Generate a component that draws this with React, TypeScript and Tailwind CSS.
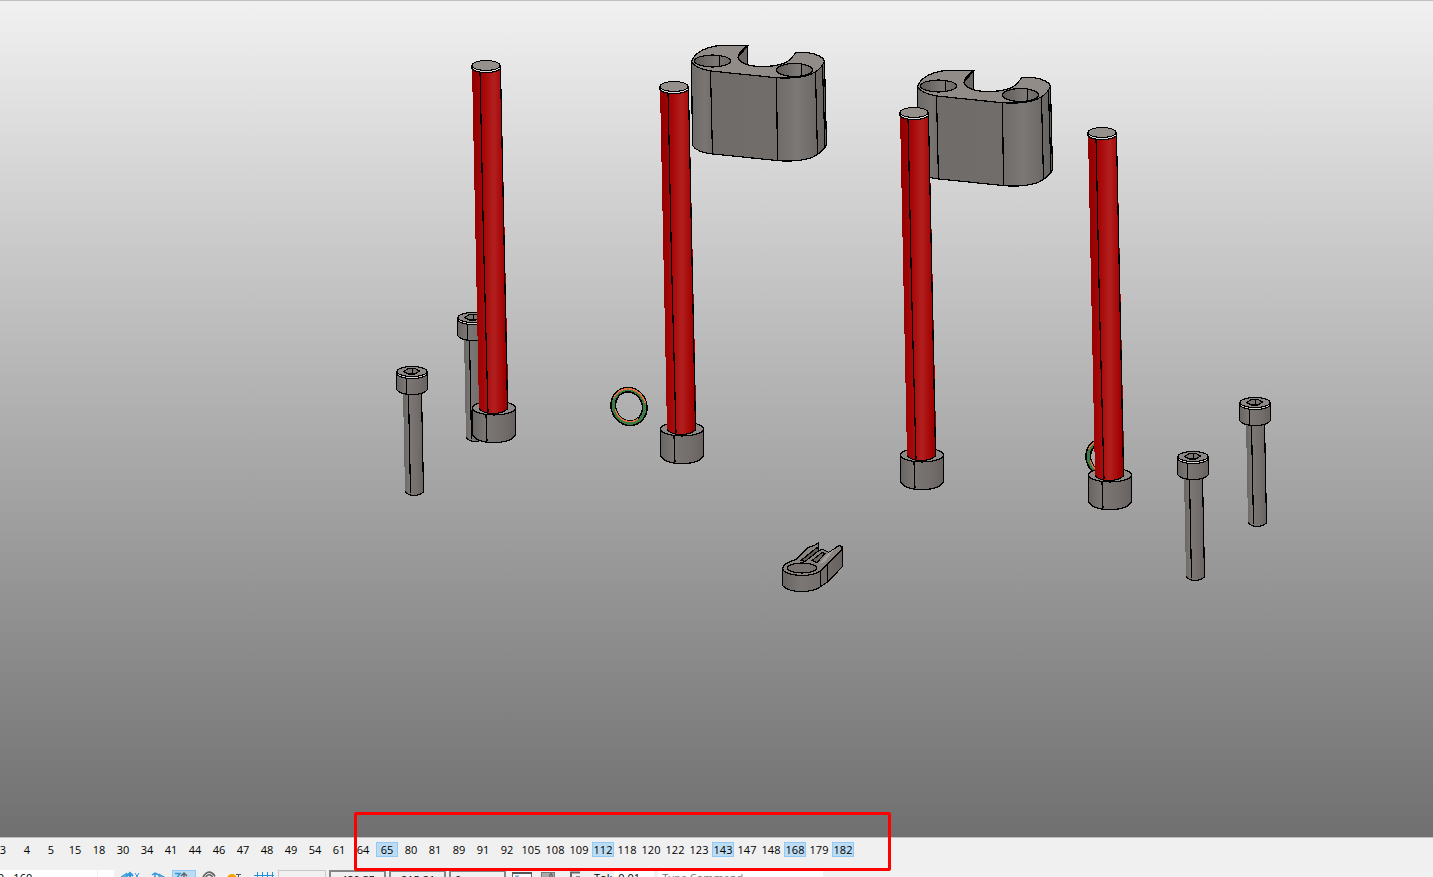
import React, { useState } from "react";
import clsx from "clsx";

const LAYERS = [
  3, 4, 5, 15, 18, 30, 34, 41, 44, 46, 47, 48, 49, 54, 61, 64, 65, 80, 81, 89, 91, 92, 105, 108,
  109, 112, 118, 120, 122, 123, 143, 147, 148, 168, 179, 182,
];

interface PartProps {
  x: number;
  y: number;
}

// Long red socket screw
const LongScrew = ({ x, y }: PartProps) => (
  <g transform={`translate(${x} ${y})`} stroke="#000" strokeWidth="1.2">
    <path d="M472.5 408V435Q476 443 494 443T515.5 435V408Z" fill="url(#steel)" />
    <ellipse cx="494" cy="408.5" rx="21.5" ry="7" fill="#8f8a87" />
    <path d="M486 415L487 442" fill="none" />
    <path d="M472 68L479 409Q483 414 493 414T508.500 409L501 68Z" fill="url(#red)" stroke="none" />
    <path d="M480 71L483.500 240L488 413M500.500 70L504 240L507.500 409" fill="none" />
    <path d="M479 409Q483 414 493 414T508 409" fill="none" />
    <path d="M472 66V69Q475 73 486 73T500.500 69V66Z" fill="#dcdbdb" />
    <ellipse cx="486" cy="66" rx="14" ry="5" fill="#96908c" />
  </g>
);

const ShortScrew = ({ x, y }: PartProps) => (
  <g transform={`translate(${x} ${y})`} stroke="#000" strokeWidth="1.2">
    <path d="M403 392L405 492Q408 496 414 496T424 492L421.5 392Z" fill="url(#steel)" stroke="none" />
    <path d="M408.5 394L410.5 494M421.5 392L423.5 492M405 492Q408 496 414 496T424 492" fill="none" />
    <path d="M396.5 373V390Q400 395 412 395T427.500 390V373Z" fill="url(#steel)" />
    <path d="M406.5 378V395" fill="none" />
    <ellipse cx="412" cy="373.500" rx="15.5" ry="5.5" fill="#d5d3d2" />
    <ellipse cx="412" cy="372" rx="15" ry="5" fill="#8f8a87" />
    <path d="M404 372L408 369H415L419.5 371.500L415 374.500H408Z" fill="#7a7572" />
    <path d="M412.5 369V374" fill="none" />
  </g>
);

const ClampBlock = ({ x, y }: PartProps) => (
  <g transform={`translate(${x} ${y})`} stroke="#000" strokeWidth="1.2">
    <path
      d="M691.5 62L692.5 146Q697 153 713 154.500L777 161Q797 163 812 158Q822 153 826.500 146L824.5 62L800 75L774 78L711 71.500Z"
      fill="url(#block)"
    />
    <path d="M747.5 47V65H744L737 58Z" fill="#6b6663" />
    <path
      d="M691.5 62Q696 50 716 46.5Q722 45 747 46.5Q738 53 738 58C740 63 748 67 763 67C778 67 788 63 791 59L796 53Q815 52 823 59L824.5 62Q820 73 804 77Q792 79.5 774 78L711 71.5Q695 69 691.5 62Z"
      fill="#928c89"
    />
    <ellipse cx="712.5" cy="61.500" rx="18" ry="6" fill="url(#hole)" />
    <ellipse cx="794.5" cy="70.500" rx="18" ry="6.5" fill="url(#hole)" />
    <path
      d="M719.5 56V66M801.5 64V76M710.5 72L712.5 155M776.5 79L777.5 161M815.5 73L817.5 155M822.5 66L825 149"
      fill="none"
    />
  </g>
);

const SealRing = ({ x, y }: PartProps) => (
  <g transform={`translate(${x} ${y}) rotate(-25)`} fill="none">
    <ellipse rx="15.500" ry="17" stroke="#000" strokeWidth="6" />
    <ellipse rx="15.500" ry="17" stroke="#3c7a48" strokeWidth="3" />
    <ellipse rx="16.500" ry="18" stroke="#e2713c" strokeWidth="1.5" strokeDasharray="42 66" strokeDashoffset="38" />
    <ellipse rx="14" ry="15.500" stroke="#e2713c" strokeWidth="1.5" strokeDasharray="0 20 30 50" />
  </g>
);

const ClipPart = () => (
  <g stroke="#000" strokeWidth="1.2" strokeLinejoin="round">
    <path
      d="M782.5 568V585Q788 591 801 591Q815 591 821 586L828 581L842.5 566V548L820 562Z"
      fill="url(#steel)"
    />
    <path
      d="M782.5 568Q783 563 796 559L808 547L814 545L818.5 542.5V550L823 549L829 552L839 545L842 546V549L827 564L821 570Q815 575 801 575Q784 574 782.5 568Z"
      fill="#8b8582"
    />
    <path d="M801 560L817 547L819 550L805 561Z" fill="#5f5b59" />
    <path d="M812 560L822 552L825 553L817 562Z" fill="#6b6663" />
    <path d="M829 552L835 548L825 561L818 564Z" fill="#a5a09d" stroke="none" />
    <ellipse cx="802" cy="567.5" rx="14.5" ry="5" fill="#77726f" />
    <path d="M793 572H811M820.5 569V586M827.5 563V581" fill="none" strokeWidth="1.5" />
  </g>
);

const ModelView = () => (
  <svg
    viewBox="0 1 1433 835"
    className="block h-full w-full"
    role="img"
    aria-label="3D model"
    shapeRendering="crispEdges"
  >
    <defs>
      <linearGradient id="red">
        <stop offset="0" stopColor="#8e0000" />
        <stop offset="0.35" stopColor="#a80808" />
        <stop offset="0.6" stopColor="#b22020" />
        <stop offset="0.85" stopColor="#a40404" />
        <stop offset="1" stopColor="#8c0000" />
      </linearGradient>
      <linearGradient id="steel">
        <stop offset="0" stopColor="#686461" />
        <stop offset="0.3" stopColor="#7b7774" />
        <stop offset="0.7" stopColor="#736e6b" />
        <stop offset="1" stopColor="#676260" />
      </linearGradient>
      <linearGradient id="block">
        <stop offset="0" stopColor="#6c6966" />
        <stop offset="0.1" stopColor="#797572" />
        <stop offset="0.16" stopColor="#706c69" />
        <stop offset="0.65" stopColor="#716d6a" />
        <stop offset="0.78" stopColor="#7c7875" />
        <stop offset="1" stopColor="#65615f" />
      </linearGradient>
      <linearGradient id="hole">
        <stop offset="0" stopColor="#5f5b59" />
        <stop offset="0.6" stopColor="#7d7976" />
        <stop offset="1" stopColor="#6b6764" />
      </linearGradient>
    </defs>

    <ClampBlock x={0} y={-1} />
    <ClampBlock x={226} y={24} />
    <ShortScrew x={0} y={-1} />
    <ShortScrew x={61} y={-55} />
    <SealRing x={629} y={406} />
    <SealRing x={1104} y={457} />
    <LongScrew x={0} y={-1} />
    <LongScrew x={188} y={20} />
    <LongScrew x={428} y={46} />
    <LongScrew x={616} y={66} />
    <ShortScrew x={781} y={84} />
    <ShortScrew x={843} y={30} />
    <ClipPart />
  </svg>
);

const toolClass = "flex h-6 w-6 shrink-0 items-start justify-center border border-transparent";
const fieldClass =
  "h-4 shrink-0 border-2 border-b-0 border-[#858585] bg-[#f0f0f0] leading-[14px]";

const StatusBar = () => (
  <div className="flex h-6 items-start bg-[#f0f0f0] text-[11px]">
    <input
      aria-label="Position"
      defaultValue="-60, -160"
      className="-ml-3 h-4 w-[109px] shrink-0 bg-white leading-4"
    />
    <button aria-label="Expand" className="ml-px h-4 w-4 shrink-0 bg-white" />
    <button aria-label="Rotate X" className={clsx(toolClass, "ml-1")}>
      <svg width="22" height="20" viewBox="0 0 22 20" fill="none" stroke="#2f97dc">
        <path d="M2 6L8 2V12Z" fill="#62ade0" />
        <path d="M11 12V2M8 5L11 2L14 5" strokeWidth="2" />
        <path d="M16 2L20 8M20 2L16 8" />
      </svg>
    </button>
    <button aria-label="Rotate Y" className={clsx(toolClass, "ml-1.5")}>
      <svg width="18" height="20" viewBox="0 0 18 20" fill="none" stroke="#2f97dc">
        <path d="M4 12V2M1 4L4 2L8 4" strokeWidth="1.500" />
        <path d="M8 3L15 7V14H8Z" fill="#62ade0" />
      </svg>
    </button>
    <button
      aria-label="Rotate Z"
      className="flex h-6 w-6 shrink-0 items-start justify-center border border-[#90c8f6] bg-[#bcdcf4]"
    >
      <svg width="20" height="20" viewBox="0 0 20 20" fill="none">
        <path d="M1 2.500H6L1 10H6" stroke="#2f97dc" strokeWidth="1.500" />
        <path d="M10 12V2M7 5L10 2L13 5" stroke="#666" strokeWidth="1.500" />
      </svg>
    </button>
    <button aria-label="Snap" className={clsx(toolClass, "ml-px")}>
      <svg width="16" height="20" viewBox="0 0 16 20" fill="none">
        <path d="M13 6Q10 1 6 3Q1 7 4 13" stroke="#666" strokeWidth="4" />
        <path d="M13 6Q10 1 6 3Q1 7 4 13" stroke="#eee" strokeWidth="1" />
      </svg>
    </button>
    <button aria-label="Point" className={clsx(toolClass, "ml-px")}>
      <svg width="16" height="20" viewBox="0 0 16 20">
        <circle cx="6" cy="8" r="5" fill="#f5a300" />
        <path d="M10 3.500H15M12.500 3V10" stroke="#555" />
      </svg>
    </button>
    <button aria-label="Grid" className={clsx(toolClass, "ml-1.5")}>
      <svg width="20" height="20" viewBox="0 0 20 20" stroke="#1f8fe0" className="shrink-0">
        <path d="M0 4.500H20M0 10.500H20M3.500 1V16M8.500 1V16M13.500 1V16M18.500 1V16" />
      </svg>
    </button>
    <input
      aria-label="Grid step"
      disabled
      className="ml-[2px] h-4 w-12 shrink-0 border border-[#c8c8c8] bg-[#f0f0f0]"
    />
    <input aria-label="X" defaultValue="480.37" className={clsx(fieldClass, "ml-[3px] w-[57px] px-2.5")} />
    <input aria-label="Y" defaultValue="215.21" className={clsx(fieldClass, "ml-[3px] w-[57px] px-2.5")} />
    <input aria-label="Z" defaultValue="0" className={clsx(fieldClass, "ml-[3px] w-[57px] px-1")} />
    <button aria-label="Text input" className={clsx(toolClass, "ml-1")}>
      <svg width="20" height="20" viewBox="0 0 20 20">
        <rect x="0.500" y="1.500" width="19" height="14" fill="#fff" stroke="#666" />
        <path d="M0 2H20" stroke="#555" strokeWidth="2" />
        <path d="M3 5H7M5 5V12" stroke="#2f97dc" />
      </svg>
    </button>
    <button aria-label="Panel" className={clsx(toolClass, "ml-[2px]")}>
      <svg width="14" height="20" viewBox="0 0 14 20">
        <rect x="0.500" y="1.500" width="13" height="16" fill="#aaa" stroke="#777" />
        <path d="M9 3V10H11V3Z" fill="#ccc" stroke="#444" />
      </svg>
    </button>
    <button aria-label="Sheet" className={clsx(toolClass, "ml-1")}>
      <svg width="12" height="20" viewBox="0 0 12 20" fill="none">
        <path d="M0 1.500H10M1 1V16" stroke="#666" strokeWidth="2" />
        <path d="M6 5.500H10" stroke="#888" />
      </svg>
    </button>
    <label htmlFor="tolerance" className="ml-1.5 h-4 shrink-0 leading-4">
      Tol:
    </label>
    <input
      id="tolerance"
      defaultValue="0.01"
      className="ml-[2px] h-4 w-10 shrink-0 bg-white pl-1 leading-4"
    />
    <input
      aria-label="Command"
      placeholder="Type Command"
      className="ml-1 h-4 w-[165px] shrink-0 bg-white pl-1 leading-4 placeholder:text-[#777]"
    />
  </div>
);

const App = () => {
  const [active, setActive] = useState<number[]>([65, 112, 143, 168, 182]);

  const toggle = (id: number) => {
    setActive(active.includes(id) ? active.filter((n) => n !== id) : [...active, id]);
  };

  return (
    <div className="flex h-screen flex-col overflow-hidden bg-[#f0f0f0] font-['Open_Sans','Noto_Sans',sans-serif] text-black">
      <main className="min-h-0 flex-1 border-t border-b border-[#c0c0c0] bg-linear-to-b from-[#f1f1f1] to-[#707070]">
        <ModelView />
      </main>

      <footer className="relative h-[39px] shrink-0">
        <div className="flex h-8 items-start gap-[2px] overflow-hidden pt-1">
          {LAYERS.map((id) => (
            <button
              key={id}
              aria-pressed={active.includes(id)}
              onClick={() => toggle(id)}
              className={clsx(
                "flex h-[15px] w-[22px] shrink-0 items-center justify-center border text-[11px] leading-none first:-ml-2",
                active.includes(id) ? "border-[#90c8f6] bg-[#bcdcf4]" : "border-transparent"
              )}
            >
              {id}
            </button>
          ))}
        </div>
        <StatusBar />
        {/* Highlight frame around the layer numbers */}
        <div className="pointer-events-none absolute -top-[26px] left-[354px] h-[59px] w-[537px] rounded-xs border-3 border-[#ff0000]" />
      </footer>
    </div>
  );
};

export default App;
